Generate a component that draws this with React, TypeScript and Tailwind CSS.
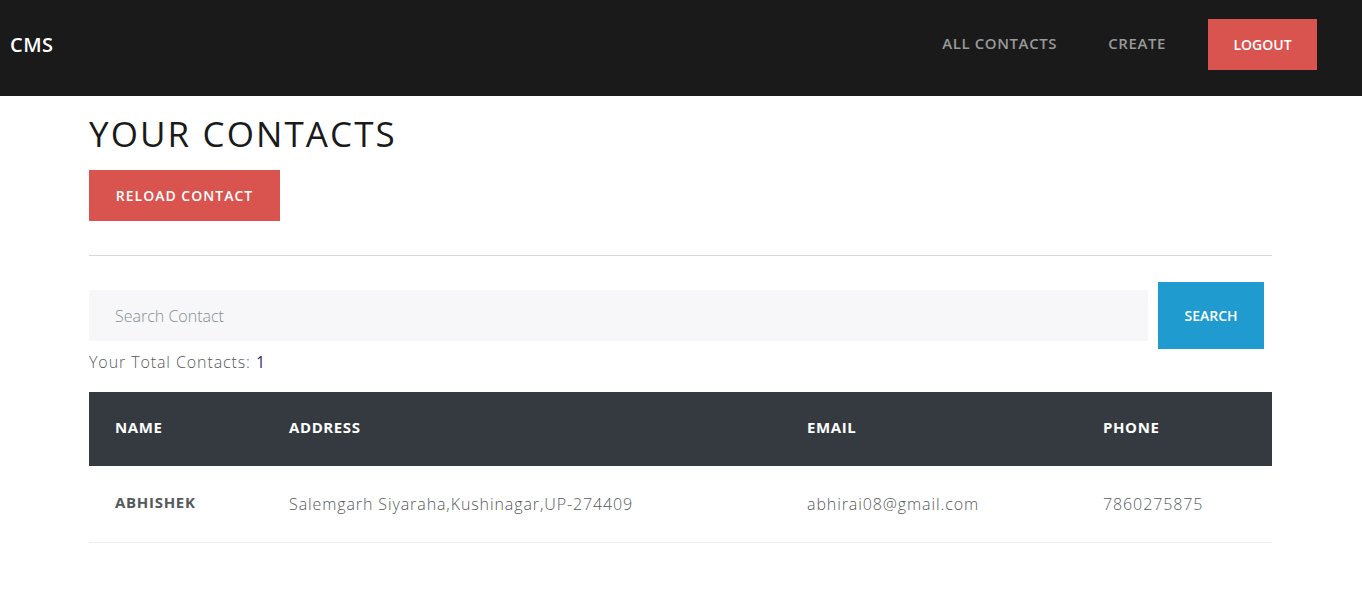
import React from "react";

const contacts = [
  {
    name: "ABHISHEK",
    address: "Salemgarh Siyaraha,Kushinagar,UP-274409",
    email: "abhirai08@gmail.com",
    phone: "7860275875",
  },
];

function Navbar() {
  return (
    <nav className="h-[96px] bg-[#1a1a1a] flex items-center justify-between pl-[10px] pr-[45px] pb-[8px]">
      <a href="#" className="text-white text-[20px] font-semibold tracking-[0.5px] mt-[2px]">
        CMS
      </a>
      <div className="flex items-center">
        <a href="#" className="text-[#999999] text-[15px] font-semibold tracking-[0.6px] mr-[51px] mb-[2px]">
          ALL CONTACTS
        </a>
        <a href="#" className="text-[#999999] text-[15px] font-semibold tracking-[0.6px] mr-[42px] mb-[2px]">
          CREATE
        </a>
        <button className="h-[51px] w-[109px] bg-[#d9534f] text-white text-[14px] font-semibold">
          LOGOUT
        </button>
      </div>
    </nav>
  );
}

export default function App() {
  return (
    <div className="min-h-screen bg-white font-['Open_Sans',sans-serif] text-[#55595c]">
      <Navbar />
      <main className="w-[1183px] ml-[89px]">
        <h1 className="mt-[16px] text-[35px] leading-[44px] font-medium tracking-[2.1px] text-[#1a1a1a]">
          YOUR CONTACTS
        </h1>
        <button className="mt-[14px] h-[51px] w-[191px] bg-[#d9534f] text-white text-[14px] font-semibold tracking-[1px]">
          RELOAD CONTACT
        </button>
        <hr className="mt-[34px] border-0 border-t border-[#d7d7d7]" />

        <div className="mt-[26px] flex items-center">
          <input
            type="text"
            placeholder="Search Contact"
            className="h-[51px] w-[1059px] bg-[#f7f7f9] px-[26px] text-[16px] font-light outline-none placeholder:text-[#868e96]"
          />
          <button className="ml-[10px] h-[67px] w-[106px] bg-[#1f9bcf] text-white text-[14px] font-semibold">
            SEARCH
          </button>
        </div>
        <p className="mt-[1px] text-[16px] font-light tracking-[0.9px] text-[#55595c]">
          Your Total Contacts: <span className="text-[#2f3170] font-normal">1</span>
        </p>

        <table className="mt-[18px] w-full border-collapse table-fixed">
          <colgroup>
            <col className="w-[174px]" />
            <col className="w-[518px]" />
            <col className="w-[296px]" />
            <col />
          </colgroup>
          <thead>
            <tr className="bg-[#343a40] h-[74px]">
              {["NAME", "ADDRESS", "EMAIL", "PHONE"].map((h) => (
                <th
                  key={h}
                  className="text-left pl-[26px] pb-[3px] text-white text-[15px] font-bold tracking-[0.6px]"
                >
                  {h}
                </th>
              ))}
            </tr>
          </thead>
          <tbody>
            {contacts.map((c) => (
              <tr key={c.email} className="h-[76px] border-b border-[#eeeeee]">
                <td className="pl-[26px] pb-[4px] text-[15px] font-bold tracking-[0.7px] text-[#55595c]">
                  {c.name}
                </td>
                <td className="pl-[26px] text-[16px] font-light tracking-[0.9px]">{c.address}</td>
                <td className="pl-[26px] text-[16px] font-light tracking-[0.9px]">{c.email}</td>
                <td className="pl-[26px] text-[16px] font-light tracking-[0.9px]">{c.phone}</td>
              </tr>
            ))}
          </tbody>
        </table>
      </main>
    </div>
  );
}
